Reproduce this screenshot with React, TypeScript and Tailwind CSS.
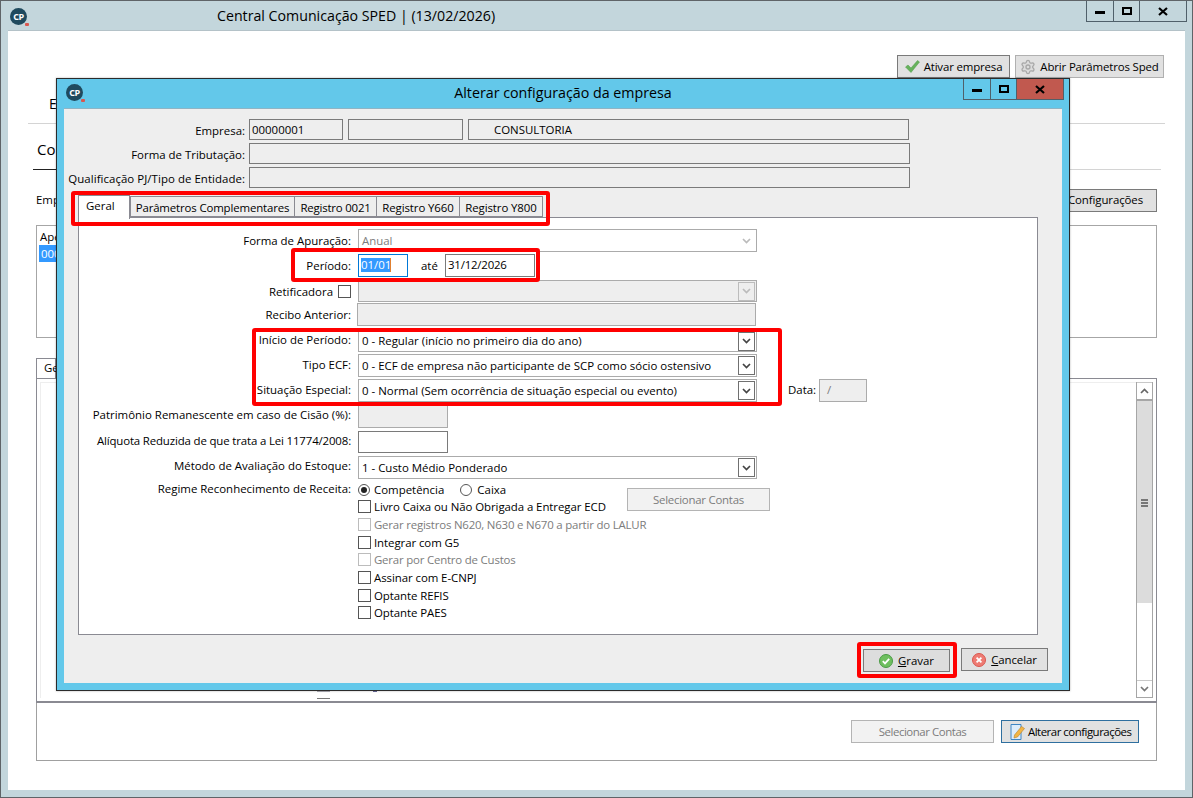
import { Settings } from 'lucide-react';

const redBox = 'absolute border-[4px] border-[#ff0000] rounded-[3px] pointer-events-none';

function CpLogo() {
  return (
    <div className="relative w-[17px] h-[17px] rounded-full bg-[#1f4a5e] flex items-center justify-center">
      <span className="text-[9px] font-bold text-white leading-none tracking-[-0.5px]">CP</span>
      <span className="absolute right-[-2px] bottom-[-1px] w-[4px] h-[3px] bg-[#d9574f] rounded-[1px]" />
    </div>
  );
}

function WinControls({ closeRed }: { closeRed?: boolean }) {
  return (
    <div className="flex h-[21px] border border-[#50606a] border-t-0">
      <div className="w-[27px] flex items-center justify-center border-r border-[#50606a]">
        <span className="w-[10px] h-[3px] bg-black mt-[3px]" />
      </div>
      <div className="w-[26px] flex items-center justify-center border-r border-[#50606a]">
        <span className="w-[10px] h-[8px] border-2 border-black" />
      </div>
      <div className={`${closeRed ? 'w-[46px] bg-[#c1594f]' : 'w-[46px]'} flex items-center justify-center`}>
        <svg width="10" height="9" viewBox="0 0 10 9">
          <path d="M1 1 L9 8 M9 1 L1 8" stroke="#000" strokeWidth="2.2" />
        </svg>
      </div>
    </div>
  );
}

function Chevron({ color = '#444' }: { color?: string }) {
  return (
    <svg width="9" height="6" viewBox="0 0 9 6">
      <path d="M1 1 L4.5 4.5 L8 1" fill="none" stroke={color} strokeWidth="1.7" />
    </svg>
  );
}

function Combo({ text, mode = 'normal', className = '' }: { text: string; mode?: 'normal' | 'flat' | 'disabled'; className?: string }) {
  const bg = mode === 'disabled' ? 'bg-[#eeeeee]' : 'bg-white';
  return (
    <div className={`w-[399px] flex items-center justify-between border border-[#ababab] pl-[3px] ${bg} ${className}`}>
      <span className={mode === 'flat' ? 'text-[#7c7c7c]' : 'text-black'}>{text}</span>
      {mode === 'flat' ? (
        <span className="w-[17px] flex justify-center mr-[1px]"><Chevron color="#bbbbbb" /></span>
      ) : mode === 'disabled' ? (
        <span className="w-[17px] h-[19px] mr-[1px] flex items-center justify-center border border-[#bcbcbc]"><Chevron color="#bbbbbb" /></span>
      ) : (
        <span className="w-[17px] h-[19px] mr-[1px] flex items-center justify-center border border-[#707070] bg-white"><Chevron /></span>
      )}
    </div>
  );
}

function FormRow({ label, className, leading = 'leading-[23px]', children }: { label: React.ReactNode; className: string; leading?: string; children: React.ReactNode }) {
  return (
    <div className={`flex ${className}`}>
      <div className={`w-[272px] text-right shrink-0 ${leading}`}>{label}</div>
      <div className="ml-[7px] flex items-start">{children}</div>
    </div>
  );
}

function CheckRow({ text, disabled, className = '' }: { text: string; disabled?: boolean; className?: string }) {
  return (
    <div className={`flex items-center h-[17.67px] ${className}`}>
      <span className={`w-[13px] h-[13px] border bg-white ${disabled ? 'border-[#bcbcbc]' : 'border-[#555555]'}`} />
      <span className={`ml-[3px] ${disabled ? 'text-[#7c7c7c] tracking-[-0.2px]' : 'text-black tracking-[-0.07px]'}`}>{text}</span>
    </div>
  );
}

function TopInput({ className, children }: { className: string; children?: React.ReactNode }) {
  return <div className={`border border-[#7a7a7a] bg-[#eeeeee] leading-[19px] h-[21px] ${className}`}>{children}</div>;
}

export default function App() {
  return (
    <div
      className="relative w-[1193px] h-[798px] overflow-hidden bg-[#c3d6dc] border border-[#5f6468] text-[11.45px] text-black flex flex-col whitespace-nowrap"
      style={{ fontFamily: '"Open Sans", "Noto Sans", sans-serif' }}
    >
      {/* main window */}
      <div className="h-[29px] shrink-0 flex items-start justify-between pl-[9px] pr-[5px]">
        <div className="flex items-center mt-[5px]">
          <CpLogo />
          <span className="ml-[190px] text-[14.2px] leading-[20px]">Central Comunicação SPED | (13/02/2026)</span>
        </div>
        <WinControls />
      </div>

      <div className="flex-1 mx-[7px] mb-[7px] bg-white flex flex-col border-t border-[#b4c2c8]">
        <div className="flex justify-end gap-[5px] mt-[24px] pr-[21px]">
          <button className="w-[113px] h-[23px] bg-[#e1e1e1] border border-[#7a7a7a] flex items-center justify-center gap-[4px] tracking-[-0.15px]">
            <svg width="15" height="13" viewBox="0 0 15 13">
              <path d="M0.5 7 L3 5 L6 8 L12.5 0.5 L14.5 2 L6 12.5 Z" fill="#66b25c" stroke="#4f9a48" strokeWidth="0.5" />
            </svg>
            Ativar empresa
          </button>
          <button className="w-[149px] h-[23px] bg-[#e1e1e1] border border-[#b0b0b0] flex items-center justify-center gap-[4px] tracking-[-0.15px]">
            <Settings size={16} className="text-[#a8a8a8] fill-[#dcdcdc]" />
            Abrir Parâmetros Sped
          </button>
        </div>

        <div className="mt-[16px] ml-[41px] text-[14px] leading-[20px]">E</div>
        <div className="mt-[9px] ml-[20px] mr-[20px] h-px bg-[#d4d4d4]" />
        <div className="mt-[15px] ml-[29px] text-[15px] leading-[20px]">Co</div>
        <div className="mt-[10px] ml-[25px] mr-[24px] h-px bg-[#d4d4d4]">
          <div className="w-[60px] h-px bg-[#222222]" />
        </div>

        <div className="mt-[18px] ml-[28px] mr-[28px] h-[24px] flex items-center justify-between">
          <span>Emp</span>
          <button className="w-[130px] h-[23px] bg-[#e1e1e1] border border-[#7a7a7a] flex items-center justify-end pr-[13px] tracking-[-0.1px]">/Configurações</button>
        </div>

        <div className="mt-[13px] ml-[28px] mr-[28px] h-[113px] border border-[#a6a6a6] p-[2px]">
          <div className="h-[17px] leading-[17px] pl-px">Ape</div>
          <div className="h-[17px] w-[19px] leading-[17px] bg-[#3399ff] text-white pl-[2px]">000</div>
        </div>

        <div className="mt-[20px] ml-[28px] w-[20px] h-[20px] border border-b-0 border-[#8a8a92] pl-[7px] leading-[17px]">Ge</div>
        <div className="relative ml-[28px] mr-[28px] h-[325px] border border-[#8a8a92] border-b-2 flex justify-end p-[3px]">
          <div className="flex-1 border-l border-t border-[#eeeeee]" />
          <div className="w-[17px] flex flex-col border-r border-[#a6a6a6] border-b border-l bg-white">
            <div className="h-[17px] flex items-center justify-center border-t border-[#c8c8c8]">
              <svg width="9" height="6" viewBox="0 0 9 6"><path d="M1 5 L4.5 1.5 L8 5" fill="none" stroke="#666" strokeWidth="1.7" /></svg>
            </div>
            <div className="h-[204px] bg-[#dcdcdc] border-t-2 border-[#a6a6a6] flex items-center justify-center pt-[2px]">
              <div className="w-[7px] flex flex-col gap-px">
                <span className="h-[2px] bg-[#777777]" />
                <span className="h-[2px] bg-[#777777]" />
                <span className="h-[2px] bg-[#777777]" />
              </div>
            </div>
            <div className="flex-1" />
            <div className="h-[17px] flex items-center justify-center border-t border-[#c8c8c8]"><Chevron color="#777777" /></div>
          </div>
          <span className="absolute left-[280px] top-[310px] w-[13px] h-[3px] border border-t-0 border-[#b0b0b8]" />
          <span className="absolute left-[280px] top-[319px] w-[13px] h-px bg-[#777777]" />
          <span className="absolute left-[336px] top-[312px] w-[4px] h-px bg-[#6a6a9a]" />
        </div>

        <div className="ml-[28px] mr-[28px] h-[58px] border border-t-0 border-[#a0a0a0] flex justify-end items-start gap-[7px] pt-[17px] pr-[17px]">
          <button className="w-[143px] h-[23px] bg-[#f2f2f2] border border-[#b4b4b4] text-[#7c7c7c] tracking-[-0.45px]">Selecionar Contas</button>
          <button className="w-[138px] h-[23px] bg-[#e1e1e1] border border-[#2f6f9f] flex items-center justify-start pl-[8px] gap-[3px] tracking-[-0.5px]">
            <svg width="15" height="16" viewBox="0 0 15 16">
              <path d="M1 0.5 H11 V15.5 H1 Z" fill="#dcecfa" stroke="#3f86c4" />
              <path d="M4.5 11 L11.5 2.5 L14.5 4.5 L7.5 13 L4 14 Z" fill="#f2b544" stroke="#b9812a" strokeWidth="0.6" />
            </svg>
            Alterar configurações
          </button>
        </div>
      </div>

      {/* dialog over the main window */}
      <div className="absolute left-[55px] top-[77px] w-[1014px] h-[613px] bg-[#63c8ea] border border-[#2b2b2b] flex flex-col shadow-[0_0_2px_rgba(0,0,0,0.3)]">
        <div className="h-[29px] shrink-0 relative flex items-start justify-between pl-[9px] pr-[5px]">
          <div className="mt-[5px]"><CpLogo /></div>
          <span className="absolute left-0 right-0 top-[4px] text-center text-[14.25px] leading-[20px]">Alterar configuração da empresa</span>
          <div className="relative"><WinControls closeRed /></div>
        </div>

        <div className="relative flex-1 mx-[7px] mb-[7px] bg-[#eeeeee] border-t border-[#8fb4c4] flex flex-col">
          <div className="flex mt-[10px] h-[21px]">
            <div className="w-[181px] text-right leading-[23px]">Empresa:</div>
            <TopInput className="ml-[4px] w-[94px] pl-[2px]">00000001</TopInput>
            <TopInput className="ml-[5px] w-[115px]" />
            <TopInput className="ml-[5px] w-[441px] pl-[25px]">CONSULTORIA</TopInput>
          </div>
          <div className="flex mt-[3px] h-[21px]">
            <div className="w-[181px] text-right leading-[23px]">Forma de Tributação:</div>
            <TopInput className="ml-[4px] w-[661px]" />
          </div>
          <div className="flex mt-[3px] h-[21px]">
            <div className="w-[181px] text-right leading-[23px] tracking-[0.05px]">Qualificação PJ/Tipo de Entidade:</div>
            <TopInput className="ml-[4px] w-[661px]" />
          </div>

          <div className="flex items-end ml-[14px] mt-[7px] h-[24px] relative z-10">
            <div className="w-[52px] h-[24px] bg-white border border-b-0 border-[#8a8a92] pl-[7px] leading-[19px]">Geral</div>
            <div className="w-[165px] h-[21px] mb-[2px] bg-[#eeeeee] border border-[#8a8a92] text-center leading-[21px] tracking-[-0.15px]">Parâmetros Complementares</div>
            <div className="w-[82px] h-[21px] mb-[2px] bg-[#eeeeee] border border-l-0 border-[#8a8a92] text-center leading-[21px] tracking-[-0.2px]">Registro 0021</div>
            <div className="w-[83px] h-[21px] mb-[2px] bg-[#eeeeee] border border-l-0 border-[#8a8a92] text-center leading-[21px] tracking-[-0.1px]">Registro Y660</div>
            <div className="w-[83px] h-[21px] mb-[2px] bg-[#eeeeee] border border-l-0 border-[#8a8a92] text-center leading-[21px] tracking-[-0.1px]">Registro Y800</div>
          </div>

          <div className="ml-[14px] mt-[-2px] w-[960px] h-[418px] bg-white border border-[#8a8a92] relative">
            <FormRow label="Forma de Apuração:" className="mt-[11px] h-[23px]">
              <Combo text="Anual" mode="flat" className="h-[23px]" />
            </FormRow>
            <FormRow label="Período:" className="mt-[2px] h-[23px]" leading="leading-[24px]">
              <div className="w-[50px] h-[23px] border border-[#0078d7] pl-[2px] pt-[3px]">
                <span className="block w-[30px] h-[14px] leading-[14px] bg-[#3399ff] text-white border-r border-[#e08030]">01/01</span>
              </div>
              <span className="ml-[13px] w-[24px] leading-[24px]">até</span>
              <div className="w-[90px] h-[23px] border border-[#7a7a7a] pl-[2px] leading-[19px] tracking-[-0.2px]">31/12/2026</div>
            </FormRow>
            <FormRow
              label={
                <span className="flex justify-end items-center h-[22px]">
                  Retificadora
                  <span className="ml-[5px] w-[13px] h-[13px] border border-[#555555] bg-white" />
                </span>
              }
              className="mt-[3px] h-[22px]"
            >
              <Combo text="" mode="disabled" className="h-[22px]" />
            </FormRow>
            <FormRow label="Recibo Anterior:" className="mt-px h-[23px]" leading="leading-[24px]">
              <div className="ml-[-1px] w-[399px] h-[23px] border border-[#ababab] bg-[#eeeeee]" />
            </FormRow>
            <FormRow label="Início de Período:" className="mt-[4px] h-[22px]" leading="leading-[20px]">
              <Combo text="0 - Regular (início no primeiro dia do ano)" className="h-[22px]" />
            </FormRow>
            <FormRow label="Tipo ECF:" className="mt-[2px] h-[23px]" leading="leading-[21px]">
              <Combo text="0 - ECF de empresa não participante de SCP como sócio ostensivo" className="h-[23px]" />
            </FormRow>
            <FormRow label="Situação Especial:" className="mt-[2px] h-[23px]" leading="leading-[21px]">
              <Combo text="0 - Normal (Sem ocorrência de situação especial ou evento)" className="h-[23px]" />
              <span className="ml-[31px] w-[31px] leading-[21px]">Data:</span>
              <div className="w-[48px] h-[23px] border border-[#ababab] bg-[#eeeeee] pl-[7px] leading-[20px] text-[#7c7c7c]">/</div>
            </FormRow>
            <FormRow label="Patrimônio Remanescente em caso de Cisão (%):" className="mt-[2px] h-[24px]" leading="leading-[21px]">
              <div className="w-[90px] h-[24px] border border-[#ababab] bg-[#eeeeee]" />
            </FormRow>
            <FormRow label={<span className="tracking-[-0.15px]">Alíquota Reduzida de que trata a Lei 11774/2008:</span>} className="mt-[3px] h-[22px]" leading="leading-[19px]">
              <div className="w-[90px] h-[22px] border border-[#7a7a7a] bg-white" />
            </FormRow>
            <FormRow label="Método de Avaliação do Estoque:" className="mt-[3px] h-[23px]" leading="leading-[19px]">
              <Combo text="1 - Custo Médio Ponderado" className="h-[23px]" />
            </FormRow>

            <div className="flex mt-px">
              <div className="w-[272px] text-right leading-[18px] shrink-0">Regime Reconhecimento de Receita:</div>
              <div className="ml-[7px] flex flex-col">
                <div className="flex items-start h-[20px]">
                  <div className="w-[269px] flex items-center h-[20px]">
                    <span className="w-[12px] h-[12px] rounded-full border border-[#555555] flex items-center justify-center">
                      <span className="w-[6px] h-[6px] rounded-full bg-[#222222]" />
                    </span>
                    <span className="ml-[4px]">Competência</span>
                    <span className="ml-[16px] w-[12px] h-[12px] rounded-full border border-[#555555]" />
                    <span className="ml-[5px]">Caixa</span>
                  </div>
                  <button className="mt-[8px] w-[143px] h-[23px] bg-[#f2f2f2] border border-[#b4b4b4] text-[#7c7c7c] tracking-[-0.25px]">Selecionar Contas</button>
                </div>
                <CheckRow text="Livro Caixa ou Não Obrigada a Entregar ECD" className="mt-[-2px]" />
                <CheckRow text="Gerar registros N620, N630 e N670 a partir do LALUR" disabled />
                <CheckRow text="Integrar com G5" />
                <CheckRow text="Gerar por Centro de Custos" disabled />
                <CheckRow text="Assinar com E-CNPJ" />
                <CheckRow text="Optante REFIS" />
                <CheckRow text="Optante PAES" />
              </div>
            </div>
          </div>

          <div className="flex justify-end gap-[11px] mt-[13px] pr-[14px] items-start">
            <button className="w-[87px] h-[23px] mt-px bg-[#dddddd] border border-[#7a7a7a] flex items-center justify-center gap-[5px]">
              <svg width="14" height="14" viewBox="0 0 14 14">
                <circle cx="7" cy="7" r="6.5" fill="#6fbf5f" stroke="#4a9a45" />
                <path d="M3.8 7.2 L6 9.4 L10.2 4.8" fill="none" stroke="#fff" strokeWidth="1.8" />
              </svg>
              <span><u>G</u>ravar</span>
            </button>
            <button className="w-[87px] h-[23px] bg-[#e1e1e1] border border-[#7a7a7a] flex items-center justify-center gap-[5px] tracking-[-0.1px]">
              <svg width="14" height="14" viewBox="0 0 14 14">
                <circle cx="7" cy="7" r="6.5" fill="#ee7b73" stroke="#d9574f" />
                <path d="M4.6 4.6 L9.4 9.4 M9.4 4.6 L4.6 9.4" stroke="#fff" strokeWidth="1.8" />
              </svg>
              <span><u>C</u>ancelar</span>
            </button>
          </div>
        </div>
      </div>

      {/* highlight boxes */}
      <div className={`${redBox} left-[70px] top-[190px] w-[479px] h-[35px]`} />
      <div className={`${redBox} left-[290px] top-[247px] w-[249px] h-[34px]`} />
      <div className={`${redBox} left-[251px] top-[327px] w-[530px] h-[78px]`} />
      <div className={`${redBox} left-[856px] top-[641px] w-[100px] h-[36px]`} />
    </div>
  );
}
